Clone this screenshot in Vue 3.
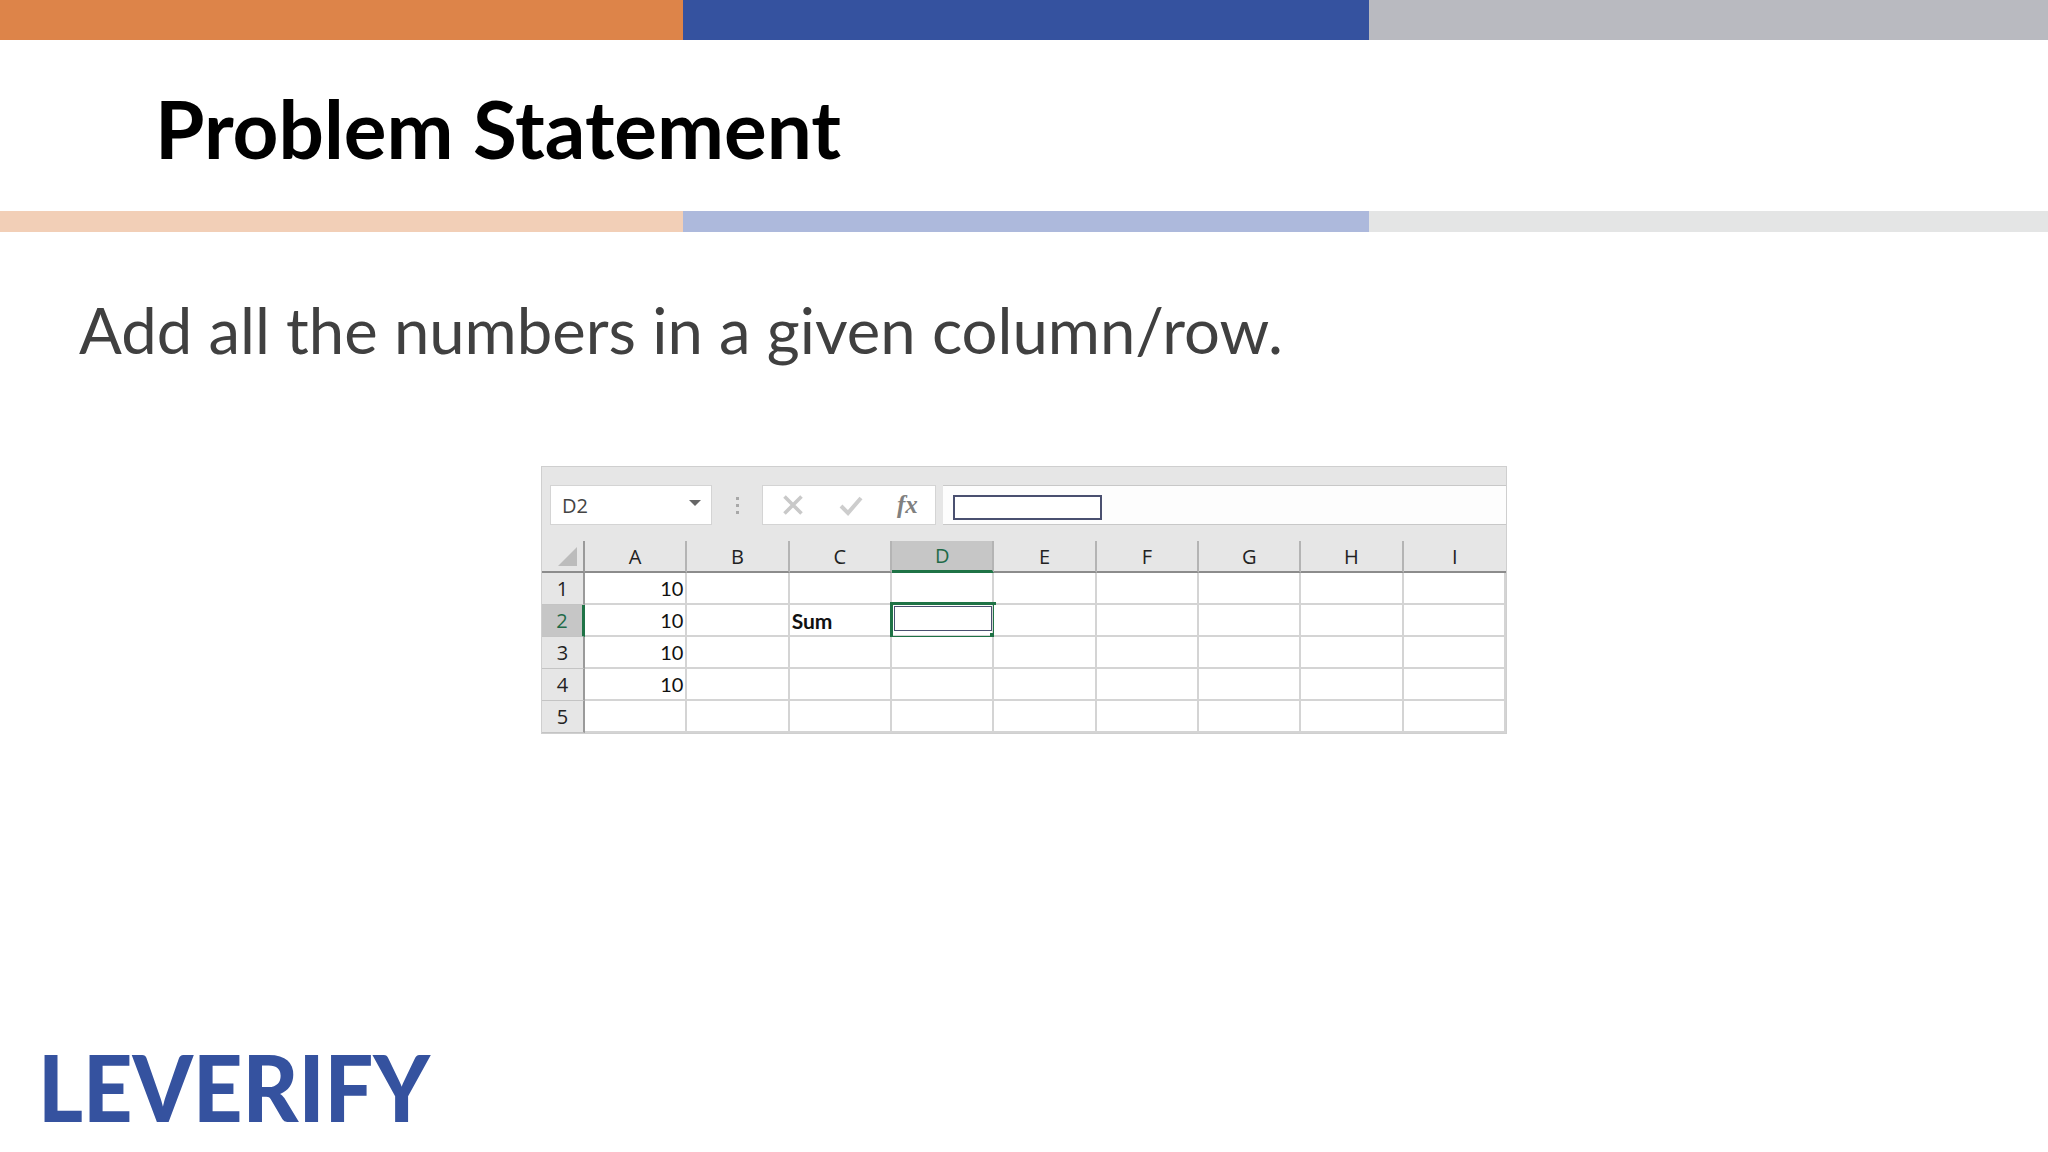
<template>
  <div class="slide">
    <!-- Franja superior -->
    <div class="franja alta">
      <div class="naranja"></div>
      <div class="azul"></div>
      <div class="gris"></div>
    </div>

    <h1 class="titulo">Problem Statement</h1>

    <div class="franja baja">
      <div class="naranja"></div>
      <div class="azul"></div>
      <div class="gris"></div>
    </div>

    <p class="texto">Add all the numbers in a given column/row.</p>

    <!-- Captura de la hoja de cálculo -->
    <div class="hoja">
      <div class="barra">
        <div class="nombre">
          <span>D2</span>
          <i class="flecha"></i>
        </div>
        <div class="puntos"><i></i><i></i><i></i></div>
        <div class="botones">
          <svg width="24" height="24" viewBox="0 0 24 24">
            <path d="M3.5 3.5 L20.5 20.5 M20.5 3.5 L3.5 20.5" stroke="#c9c9c9" stroke-width="3.6" fill="none" />
          </svg>
          <svg width="26" height="24" viewBox="0 0 26 24">
            <path d="M3 13 L10 20 L23 5" stroke="#cdcdcd" stroke-width="4" fill="none" />
          </svg>
          <span class="fx">fx</span>
        </div>
        <div class="formula">
          <div class="caja"></div>
        </div>
      </div>

      <div class="tabla">
        <div class="esquina">
          <svg width="20" height="20" viewBox="0 0 20 20">
            <polygon points="19,0 19,19 0,19" fill="#bcbcbc" />
          </svg>
        </div>
        <div
          v-for="col in columnas"
          :key="col"
          class="cab"
          :class="{ activa: col === 'D' }"
        >
          {{ col }}
        </div>

        <template v-for="(fila, i) in filas" :key="i">
          <div class="num" :class="{ activa: i === 1 }">{{ i + 1 }}</div>
          <div
            v-for="col in columnas"
            :key="col"
            class="celda"
            :class="{ derecha: col === 'A', negrita: col === 'C' }"
          >
            {{ fila[col] }}
            <div v-if="i === 1 && col === 'D'" class="seleccion"><i></i></div>
          </div>
        </template>
      </div>
    </div>

    <div class="logo">
      <svg width="400" height="74" viewBox="0 0 400 74">
        <text x="1" y="71" textLength="392" lengthAdjust="spacingAndGlyphs">LEVERIFY</text>
      </svg>
    </div>
  </div>
</template>

<script setup>
const columnas = ['A', 'B', 'C', 'D', 'E', 'F', 'G', 'H', 'I']

const filas = [
  { A: '10' },
  { A: '10', C: 'Sum' },
  { A: '10' },
  { A: '10' },
  {}
]
</script>

<style>
html, body {
  margin: 0;
  background: #fff;
}
</style>

<style scoped>
.slide {
  width: 2048px;
  height: 1152px;
  display: flex;
  flex-direction: column;
  background: #fff;
  overflow: hidden;
  font-family: Lato, "Liberation Sans", sans-serif;
}

.franja {
  display: grid;
  grid-template-columns: 683px 686px 1fr;
}

.alta { height: 40px; }
.baja { height: 21px; }

.alta .naranja { background: #dd8449; }
.alta .azul { background: #35529f; }
.alta .gris { background: #b9bac0; }

.baja .naranja { background: #f2cfb7; }
.baja .azul { background: #adb9dc; }
.baja .gris { background: #e4e5e5; }

.titulo {
  height: 171px;
  margin: 0;
  padding: 5px 0 0 155px;
  box-sizing: border-box;
  font-size: 80px;
  line-height: 166px;
  font-weight: 700;
  color: #000;
}

.texto {
  height: 102px;
  margin: 47px 0 0;
  padding-left: 79px;
  font-size: 63.4px;
  line-height: 102px;
  color: #404040;
}

.hoja {
  width: 966px;
  margin: 85px 0 0 541px;
  background: #e6e6e6;
  border: 1px solid #cfcfcf;
  box-sizing: border-box;
  font-family: "Open Sans", sans-serif;
  color: #222;
}

.barra {
  display: flex;
  height: 74px;
  padding: 18px 0 0 8px;
  box-sizing: border-box;
}

.nombre {
  width: 162px;
  height: 40px;
  display: flex;
  align-items: center;
  justify-content: space-between;
  padding: 0 10px 0 11px;
  box-sizing: border-box;
  background: #fff;
  border: 1px solid #d4d4d4;
  font-size: 20px;
  color: #444;
}

.flecha {
  width: 0;
  height: 0;
  margin-bottom: 4px;
  border-left: 6px solid transparent;
  border-right: 6px solid transparent;
  border-top: 6px solid #666;
}

.puntos {
  width: 50px;
  height: 40px;
  display: flex;
  flex-direction: column;
  align-items: center;
  justify-content: center;
  gap: 4px;
}

.puntos i {
  width: 3px;
  height: 3px;
  background: #a8a8a8;
}

.botones {
  width: 174px;
  height: 40px;
  display: flex;
  align-items: center;
  gap: 33px;
  padding-left: 18px;
  box-sizing: border-box;
  background: #fff;
  border: 1px solid #d4d4d4;
}

.fx {
  font-family: "Liberation Serif", serif;
  font-style: italic;
  font-weight: 700;
  font-size: 25px;
  color: #808080;
}

.formula {
  flex: 1;
  height: 40px;
  margin-left: 7px;
  padding: 9px 0 0 10px;
  box-sizing: border-box;
  background: #fdfdfd;
  border-top: 1px solid #c8c8c8;
  border-bottom: 1px solid #c8c8c8;
}

.caja {
  width: 149px;
  height: 25px;
  box-sizing: border-box;
  background: #fff;
  border: 2px solid #4a5070;
}

.tabla {
  display: grid;
  grid-template-columns: 43px repeat(9, 1fr);
  grid-template-rows: repeat(6, 32px);
}

.esquina {
  display: flex;
  align-items: flex-end;
  justify-content: flex-end;
  padding: 0 5px 4px 0;
  border-bottom: 2px solid #8c8c8c;
  border-right: 2px solid #9a9a9a;
  box-sizing: border-box;
}

.cab {
  display: flex;
  align-items: center;
  justify-content: center;
  box-sizing: border-box;
  border-right: 2px solid #b4b4b4;
  border-bottom: 2px solid #8c8c8c;
  font-size: 20px;
}

.cab:nth-child(10) { border-right: none; }

.cab.activa {
  background: #c6c6c6;
  border-bottom: 3px solid #1f7346;
  color: #1f6a48;
}

.num {
  display: flex;
  align-items: center;
  justify-content: center;
  box-sizing: border-box;
  border-right: 2px solid #9a9a9a;
  border-bottom: 1px solid #c4c4c4;
  font-size: 20px;
}

.num.activa {
  background: #c6c6c6;
  border-right: 3px solid #1f7346;
  color: #1f6a48;
}

.celda {
  position: relative;
  display: flex;
  align-items: center;
  padding: 0 2px;
  box-sizing: border-box;
  background: #fff;
  border-right: 2px solid #d4d4d4;
  border-bottom: 2px solid #d4d4d4;
  font-family: Lato, sans-serif;
  font-size: 20px;
  color: #111;
}

.derecha { justify-content: flex-end; }
.negrita { font-weight: 700; font-size: 21px; }

/* Marco verde de la celda activa */
.seleccion {
  position: absolute;
  inset: -3px -4px -4px -2px;
  border: 3px solid #1f7346;
}

.seleccion::before {
  content: "";
  position: absolute;
  inset: 1px 1px 5px 1px;
  border: 1px solid #4a5070;
}

.seleccion i {
  position: absolute;
  right: -5px;
  bottom: -5px;
  width: 8px;
  height: 8px;
  background: #1f7346;
}

.logo {
  margin: 317px 0 0 37px;
  height: 74px;
}

.logo text {
  font-family: Lato, sans-serif;
  font-weight: 900;
  font-size: 91px;
  fill: #35529f;
}
</style>
